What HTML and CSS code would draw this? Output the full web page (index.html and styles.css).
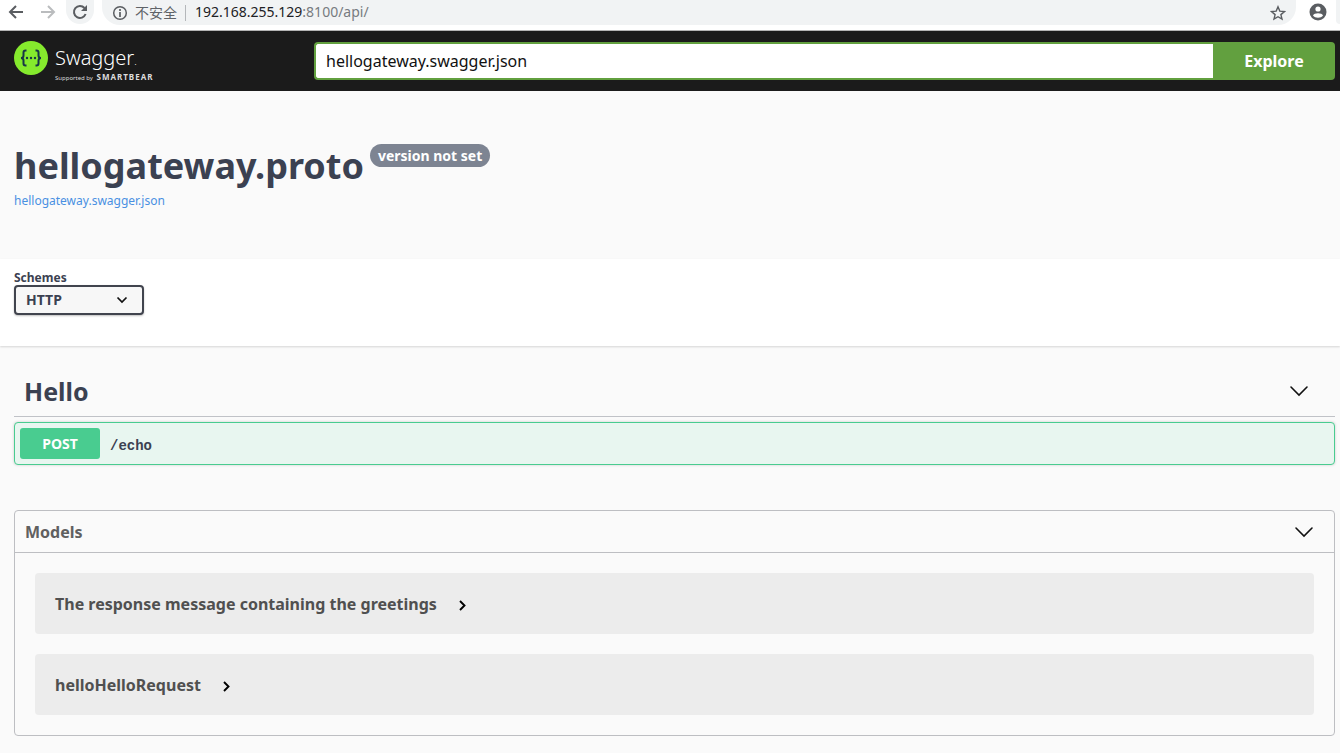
FILE: index.html
```html
<!DOCTYPE html>
<html lang="en">
<head>
    <meta charset="UTF-8">
    <meta name="viewport" content="width=device-width, initial-scale=1.0">
    <title>Swagger UI</title>
    <link rel="stylesheet" href="styles.css">
</head>
<body>
    <!-- Browser bar -->
    <div class="browser-bar">
        <button class="nav-btn" aria-label="Back">
            <svg width="16" height="16" viewBox="0 0 16 16"><path d="M15 8H2M8 2L2 8l6 6" fill="none" stroke="#5a5d61" stroke-width="2"/></svg>
        </button>
        <button class="nav-btn" aria-label="Forward">
            <svg width="16" height="16" viewBox="0 0 16 16"><path d="M1 8h13M8 2l6 6-6 6" fill="none" stroke="#babcbe" stroke-width="2"/></svg>
        </button>
        <button class="nav-btn reload" aria-label="Reload">
            <svg width="16" height="16" viewBox="0 0 16 16"><path d="M13.600 10A6 6 0 1 1 12.500 4" fill="none" stroke="#5a5d61" stroke-width="2"/><path d="M15 1v6H9z" fill="#5a5d61"/></svg>
        </button>
        <div class="address">
            <svg width="16" height="16" viewBox="0 0 16 16"><circle cx="8" cy="8" r="6.300" fill="none" stroke="#5a5d61" stroke-width="1.500"/><path d="M8 7v5M8 4v2" stroke="#5a5d61" stroke-width="1.700"/></svg>
            <span class="insecure" lang="zh">不安全</span>
            <span class="url">192.168.255.129<span class="path">:8100/api/</span></span>
            <button class="star" aria-label="Bookmark">
                <svg width="16" height="16" viewBox="0 0 16 16"><path d="M8 1.800l1.800 4.300 4.700.4-3.600 3.100 1.100 4.500-4-2.400-4 2.400 1.100-4.500L1.500 6.500l4.700-.4z" fill="none" stroke="#5a5d61" stroke-width="1.400"/></svg>
            </button>
        </div>
        <button class="profile" aria-label="Profile">
            <svg width="18" height="18" viewBox="0 0 18 18"><circle cx="9" cy="9" r="8.500" fill="#5a5d61"/><circle cx="9" cy="6" r="2.600" fill="#fff"/><path d="M4 12.600c1-3 9-3 10 0-2 3-8 3-10 0z" fill="#fff"/></svg>
        </button>
        <span class="bar-edge"></span>
    </div>

    <header class="topbar">
        <a class="logo" href="#" aria-label="Swagger">
            <svg width="34" height="34" viewBox="0 0 34 34">
                <circle cx="17" cy="17" r="17" fill="#85ea2d"/>
                <g fill="none" stroke="#173647" stroke-width="2">
                    <path d="M12.500 9.500h-1q-2 0-2 2v3q0 2.500-2.500 2.500 2.500 0 2.500 2.500v3q0 2 2 2h1"/>
                    <path d="M21.500 9.500h1q2 0 2 2v3q0 2.500 2.500 2.500-2.500 0-2.500 2.500v3q0 2-2 2h-1"/>
                </g>
                <g fill="#173647"><circle cx="13" cy="17" r="1.200"/><circle cx="17" cy="17" r="1.200"/><circle cx="21" cy="17" r="1.200"/></g>
            </svg>
            <span class="logo-text">
                <span class="logo-name">Swagger<small>.</small></span>
                <span class="logo-sub">Supported by <b>SMARTBEAR</b></span>
            </span>
        </a>
        <form class="download-url">
            <input type="text" value="hellogateway.swagger.json" aria-label="Definition URL">
            <button type="button">Explore</button>
        </form>
    </header>

    <section class="info">
        <h1>hellogateway.proto<span class="version">version not set</span></h1>
        <a href="#">hellogateway.swagger.json</a>
    </section>

    <section class="schemes">
        <label for="schemes">Schemes</label>
        <div class="select-wrap">
            <select id="schemes">
                <option>HTTP</option>
            </select>
            <svg width="12" height="8" viewBox="0 0 12 8"><path d="M1.500 1.500L6 6l4.500-4.500" fill="none" stroke="#111" stroke-width="1.700"/></svg>
        </div>
    </section>

    <main>
        <section class="tag">
            <h2>Hello</h2>
            <button aria-label="Collapse Hello">
                <svg width="20" height="12" viewBox="0 0 20 12"><path d="M2 2l8 8 8-8" fill="none" stroke="#111" stroke-width="1.600" stroke-linecap="round"/></svg>
            </button>
        </section>
        <div class="opblock">
            <button class="method">POST</button>
            <span class="op-path">/echo</span>
        </div>

        <section class="models">
            <div class="models-head">
                <h3>Models</h3>
                <button aria-label="Collapse models">
                    <svg width="20" height="12" viewBox="0 0 20 12"><path d="M2 2l8 8 8-8" fill="none" stroke="#111" stroke-width="1.600" stroke-linecap="round"/></svg>
                </button>
            </div>
            <div class="models-list">
                <button class="model">
                    <span>The response message containing the greetings</span>
                    <svg width="10" height="14" viewBox="0 0 10 14"><path d="M3 4l4.500 4.500L3 13" fill="none" stroke="#000" stroke-width="1.900"/></svg>
                </button>
                <button class="model">
                    <span>helloHelloRequest</span>
                    <svg width="10" height="14" viewBox="0 0 10 14"><path d="M3 4l4.500 4.500L3 13" fill="none" stroke="#000" stroke-width="1.900"/></svg>
                </button>
            </div>
        </section>
    </main>
</body>
</html>
```

FILE: styles.css
```css
* {
    box-sizing: border-box;
}
body {
    margin: 0;
    background: #fafafa;
    color: #3b4151;
    font-family: "Noto Sans", "Noto Sans CJK SC", sans-serif;
}
h1, h2, h3 {
    margin: 0;
}
button {
    border: none;
    padding: 0;
    background: none;
    font-family: inherit;
    cursor: pointer;
}
svg {
    display: block;
}

/* Browser bar */
.browser-bar {
    display: flex;
    height: 31px;
    padding: 0 0 6px 2px;
    background: #fff;
    border-bottom: 1px solid #b4b4b4;
    overflow: hidden;
}
.nav-btn {
    display: flex;
    align-items: center;
    justify-content: center;
    width: 28px;
    height: 24px;
    margin-right: 4px;
}
.reload {
    background: #f1f3f4;
    border-radius: 0 0 14px 14px;
}
.address {
    display: flex;
    flex: 1;
    align-items: center;
    height: 25px;
    margin-left: 4px;
    padding: 0 10px;
    background: #f1f3f4;
    border-radius: 0 0 18px 18px;
    font-size: 14px;
    line-height: 22px;
}
.insecure {
    margin: 0 8px 0 7px;
    padding-bottom: 2px;
    color: #5f6368;
    font-family: "Noto Sans CJK SC", sans-serif;
}
.url {
    height: 16px;
    padding-left: 9px;
    border-left: 1px solid #b4b7ba;
    color: #202124;
    line-height: 14px;
}
.path {
    color: #777b80;
}
.star {
    margin-left: auto;
}
.profile {
    margin: 0 9px 0 13px;
}
.bar-edge {
    width: 4px;
    background: #f1f3f4;
    border-radius: 0 0 0 4px;
}

/* Topbar */
.topbar {
    display: flex;
    align-items: center;
    height: 60px;
    padding: 0 5px 0 14px;
    background: #1b1b1b;
}
.logo {
    display: flex;
    gap: 7px;
    width: 300px;
    height: 40px;
    color: #fff;
    text-decoration: none;
}
.logo-text {
    display: flex;
    flex-direction: column;
    padding-top: 4px;
}
.logo-name {
    font-family: "Noto Sans", sans-serif;
    font-size: 20px;
    font-weight: 300;
    line-height: 25px;
}
.logo-name small {
    font-size: 10px;
}
.logo-sub {
    color: #ddd;
    font-size: 6px;
    line-height: 6px;
    white-space: nowrap;
}
.logo-sub b {
    margin-left: 2px;
    font-size: 8px;
    letter-spacing: 1px;
}
.download-url {
    display: flex;
    flex: 1;
    height: 38px;
}
.download-url input {
    flex: 1;
    min-width: 0;
    padding: 0 10px;
    border: 2px solid #62a03f;
    border-right: none;
    border-radius: 4px 0 0 4px;
    outline: none;
    background: #fff;
    color: #111;
    font-family: inherit;
    font-size: 16px;
}
.download-url button {
    width: 122px;
    background: #62a03f;
    border-radius: 0 4px 4px 0;
    color: #fff;
    font-size: 16px;
    font-weight: 700;
}

/* Info */
.info {
    padding: 50px 14px 49px;
}
.info h1 {
    display: flex;
    align-items: flex-start;
    gap: 6px;
    font-size: 36px;
    line-height: 50px;
}
.version {
    margin-top: 3px;
    padding: 0 8px;
    background: #7d8492;
    border-radius: 12px;
    color: #fff;
    font-size: 14px;
    line-height: 23px;
}
.info a {
    display: block;
    color: #4990e2;
    font-size: 12px;
    line-height: 19px;
    text-decoration: none;
}

/* Schemes */
.schemes {
    height: 87px;
    padding: 11px 14px;
    background: #fff;
    box-shadow: 0 1px 2px rgba(0, 0, 0, 0.15);
}
.schemes label {
    display: block;
    font-size: 12px;
    font-weight: 700;
    line-height: 15px;
}
.select-wrap {
    position: relative;
    width: 130px;
}
.select-wrap select {
    width: 100%;
    height: 30px;
    padding: 0 10px 2px;
    appearance: none;
    background: #f7f7f7;
    border: 2px solid #41444e;
    border-radius: 4px;
    box-shadow: 0 1px 2px rgba(0, 0, 0, 0.25);
    color: #3b4151;
    font-family: inherit;
    font-size: 14px;
    font-weight: 700;
}
.select-wrap svg {
    position: absolute;
    top: 11px;
    right: 16px;
    pointer-events: none;
}

/* Operations */
main {
    padding: 20px 5px 17px 14px;
}
.tag {
    display: flex;
    align-items: center;
    justify-content: space-between;
    height: 51px;
    padding: 0 26px 0 10px;
    border-bottom: 1px solid #c0c2c7;
}
.tag h2 {
    font-size: 25px;
    line-height: 30px;
}
.opblock {
    display: flex;
    align-items: center;
    gap: 10px;
    margin: 5px 0 45px;
    padding: 5px;
    background: #e8f6f0;
    border: 1px solid #49cc90;
    border-radius: 4px;
    box-shadow: 0 0 3px rgba(0, 0, 0, 0.19);
}
.method {
    width: 80px;
    height: 31px;
    background: #49cc90;
    border-radius: 3px;
    color: #fff;
    font-size: 14px;
    font-weight: 700;
}
.op-path {
    padding-top: 4px;
    font-family: "Liberation Mono", monospace;
    font-size: 14px;
    font-weight: 700;
}

/* Models */
.models {
    border: 1px solid #bdbec2;
    border-radius: 4px;
}
.models-head {
    display: flex;
    align-items: center;
    justify-content: space-between;
    height: 42px;
    padding: 0 20px 0 10px;
    border-bottom: 1px solid #bdbec2;
}
.models-head h3 {
    color: #606060;
    font-size: 16px;
}
.models-list {
    display: flex;
    flex-direction: column;
    gap: 20px;
    padding: 20px;
}
.model {
    display: flex;
    align-items: center;
    gap: 20px;
    height: 61px;
    padding: 0 20px;
    background: #ececec;
    border-radius: 4px;
    color: #505050;
    font-size: 16px;
    font-weight: 700;
}
```
